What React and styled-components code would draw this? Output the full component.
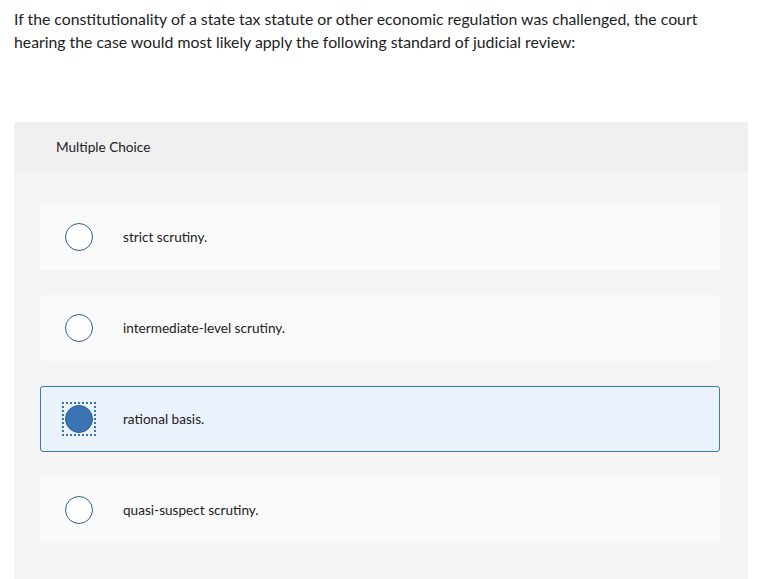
import styled, { createGlobalStyle } from 'styled-components';
import { useState } from 'react';

const GlobalStyle = createGlobalStyle`
  html, body {
    margin: 0;
    padding: 0;
    background: #fff;
  }
  body {
    font-family: Lato, 'Open Sans', Arial, sans-serif;
    color: #222;
  }
`;

const options = [
  'strict scrutiny.',
  'intermediate-level scrutiny.',
  'rational basis.',
  'quasi-suspect scrutiny.',
];

export default function App() {
  const [selected, setSelected] = useState(2);

  return (
    <Page>
      <GlobalStyle />
      <Question>
        If the constitutionality of a state tax statute or other economic regulation was challenged, the court
        hearing the case would most likely apply the following standard of judicial review:
      </Question>
      <Panel>
        <PanelHeader>Multiple Choice</PanelHeader>
        <OptionList>
          {options.map((text, i) => (
            <Option key={text} active={i === selected} onClick={() => setSelected(i)}>
              <RadioWrap active={i === selected}>
                <Radio active={i === selected} />
              </RadioWrap>
              <OptionText>{text}</OptionText>
            </Option>
          ))}
        </OptionList>
      </Panel>
    </Page>
  );
}

const Page = styled.div`
  padding: 7px 21px 0 14px;
`;

const Question = styled.div`
  font-size: 15.8px;
  line-height: 23px;
  color: #222;
  width: 720px;
`;

const Panel = styled.div`
  margin-top: 69px;
  background: #f5f5f5;
  border-radius: 3px 3px 0 0;
  min-height: 480px;
`;

const PanelHeader = styled.div`
  height: 50px;
  display: flex;
  align-items: center;
  padding-left: 42px;
  background: #f0f0f0;
  border-radius: 3px 3px 0 0;
  font-size: 13.6px;
  color: #222;
`;

const OptionList = styled.div`
  display: flex;
  flex-direction: column;
  gap: 25px;
  padding: 32px 28px 0 26px;
`;

const Option = styled.div`
  height: 66px;
  box-sizing: border-box;
  display: flex;
  align-items: center;
  padding-left: ${(p) => (p.active ? '21px' : '22px')};
  background: ${(p) => (p.active ? '#eaf2fb' : '#fafafa')};
  border: ${(p) => (p.active ? '1px solid #3d78b8' : 'none')};
  border-radius: 3px;
  cursor: pointer;
`;

const RadioWrap = styled.div`
  width: 34px;
  height: 34px;
  box-sizing: border-box;
  display: flex;
  align-items: center;
  justify-content: center;
  border: 2px dotted ${(p) => (p.active ? '#3b72b0' : 'transparent')};
`;

const Radio = styled.div`
  width: 28px;
  height: 28px;
  box-sizing: border-box;
  border-radius: 50%;
  border: 1.5px solid #2f5f8f;
  background: ${(p) => (p.active ? '#3b74b5' : '#fff')};
`;

const OptionText = styled.div`
  margin-left: 27px;
  font-size: 13.6px;
  color: #222;
`;
